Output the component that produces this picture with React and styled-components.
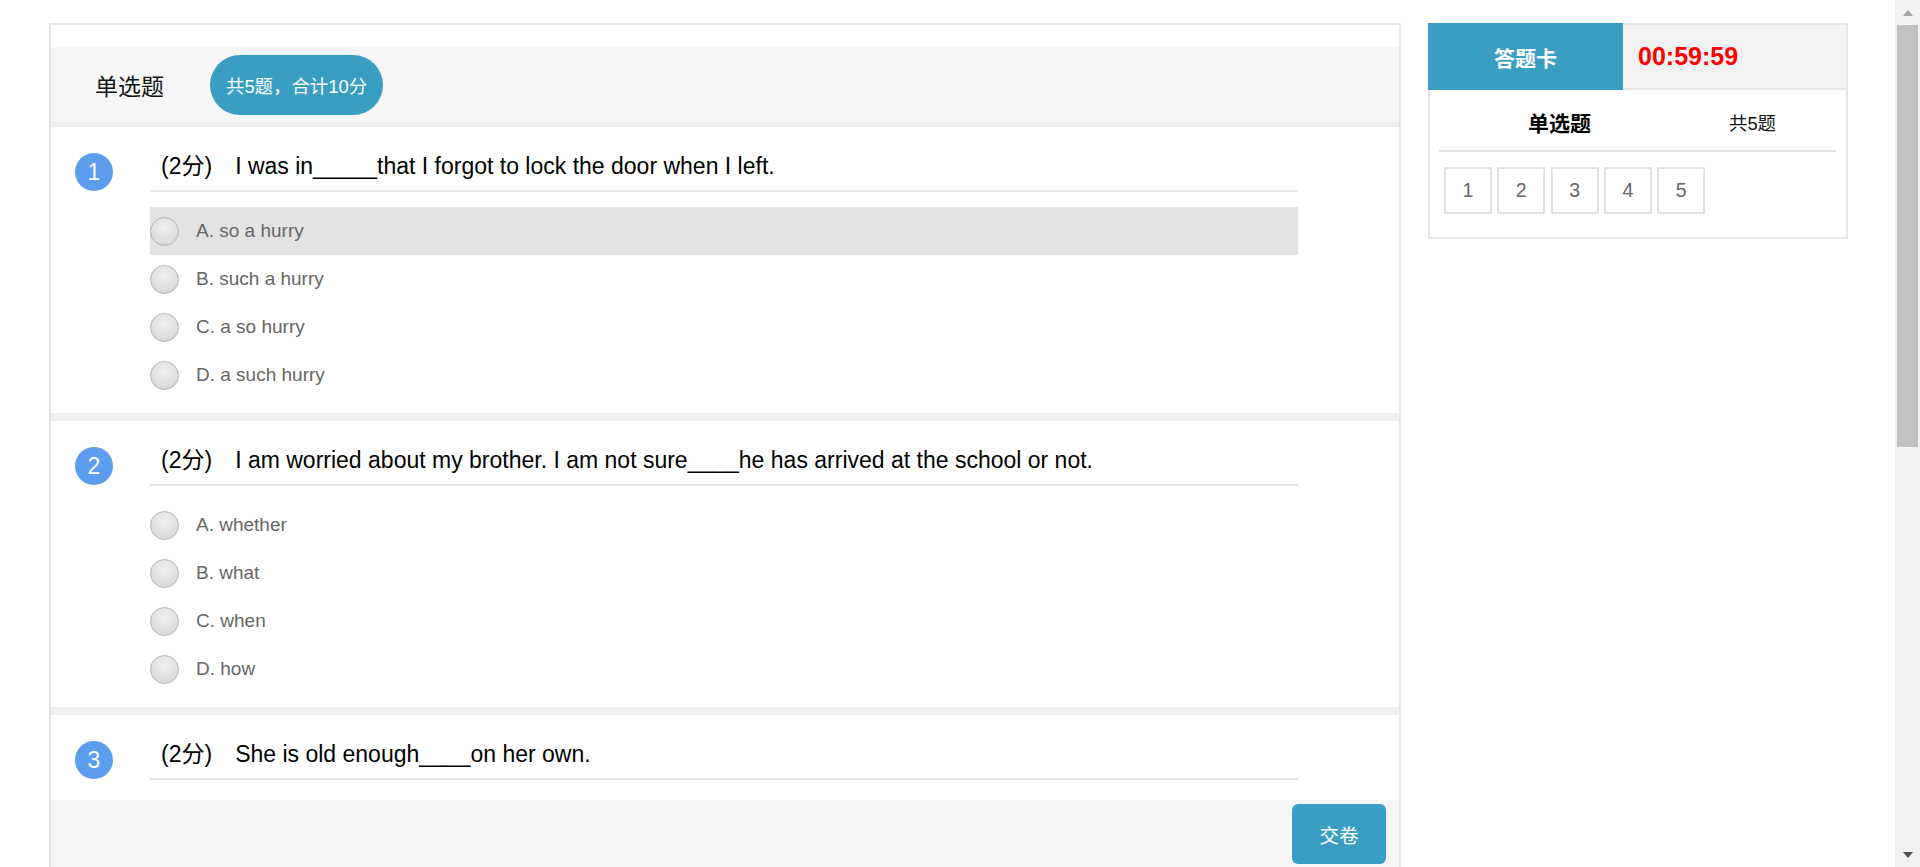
import React from 'react';
import styled, { createGlobalStyle } from 'styled-components';

const Global = createGlobalStyle`
  html, body { margin: 0; padding: 0; height: 100%; overflow: hidden; background: #fff; }
  body { font-family: "Liberation Sans", "Noto Sans CJK SC", sans-serif; }
  #root { height: 100%; }
  *, *::before, *::after { box-sizing: border-box; }
`;

const Page = styled.div`
  display: flex;
  height: 100vh;
`;

const Viewport = styled.div`
  flex: 1;
  min-width: 0;
  height: 100%;
  display: flex;
  align-items: stretch;
  gap: 27px;
  padding: 23px 0 0 49px;
`;

const MainPanel = styled.section`
  width: 1352px;
  display: flex;
  flex-direction: column;
  border: 2px solid #e6e6e6;
  border-bottom: none;
  padding-top: 22px;
  background: #fff;
`;

const SectionHeader = styled.div`
  flex-shrink: 0;
  height: 75px;
  background: #f7f7f7;
  display: flex;
  align-items: center;
  gap: 46px;
  padding-left: 44px;
`;

const SectionTitle = styled.h2`
  margin: 0;
  font-size: 23px;
  font-weight: normal;
  color: #111;
`;

const Pill = styled.span`
  height: 60px;
  padding: 0 16px;
  border-radius: 30px;
  background: #3a9ec2;
  color: #fff;
  font-size: 18.4px;
  display: flex;
  align-items: center;
`;

const QuestionList = styled.div`
  flex: 1;
  min-height: 0;
  overflow: hidden;
  background: #efefef;
  padding-top: 5px;
  display: flex;
  flex-direction: column;
  gap: 8px;
`;

const Card = styled.article`
  flex-shrink: 0;
  background: #fff;
  display: flex;
  align-items: flex-start;
  gap: 37px;
  padding: 26px 101px 14px 24px;

  &:last-child {
    flex-grow: 1;
  }
`;

const NumBadge = styled.div`
  flex-shrink: 0;
  width: 38px;
  height: 38px;
  border-radius: 50%;
  background: #5c9ded;
  color: #fff;
  font-size: 23px;
  display: flex;
  align-items: center;
  justify-content: center;
`;

const QBody = styled.div`
  flex: 1;
  min-width: 0;
`;

const QTitle = styled.div`
  font-size: 23px;
  line-height: 26px;
  color: #000;
  padding: 0 11px 11px;
  border-bottom: 2px solid #e4e4e4;
`;

const Score = styled.span`
  margin-right: 23px;
`;

const Options = styled.ul`
  list-style: none;
  margin: 15px 0 0;
  padding: 0;
`;

const Option = styled.li`
  height: 48px;
  display: flex;
  align-items: center;
  gap: 17px;
  background: ${(p) => (p.$active ? '#e3e3e3' : 'transparent')};
  font-size: 19px;
  color: #666;
`;

const Radio = styled.span`
  flex-shrink: 0;
  width: 29px;
  height: 29px;
  border-radius: 50%;
  border: 1px solid #b3b3b3;
  background: radial-gradient(circle at 50% 35%, #f1f1f1 0%, #dedede 60%, #d4d4d4 100%);
`;

const Footer = styled.footer`
  flex-shrink: 0;
  height: 67px;
  background: #f6f6f6;
  display: flex;
  justify-content: flex-end;
  align-items: flex-start;
  padding: 4px 13px 0 0;
`;

const SubmitButton = styled.button`
  width: 94px;
  height: 60px;
  border: none;
  border-radius: 6px;
  background: #3a9ec2;
  color: #fff;
  font-family: inherit;
  font-size: 19.6px;
  cursor: pointer;
`;

const Sidebar = styled.aside`
  width: 420px;
  align-self: flex-start;
`;

const TabRow = styled.div`
  display: flex;
  height: 67px;
`;

const Tab = styled.div`
  width: 195px;
  background: #3a9ec2;
  color: #fff;
  font-size: 21px;
  font-weight: bold;
  display: flex;
  align-items: center;
  justify-content: center;
`;

const Timer = styled.div`
  flex: 1;
  background: #f2f2f2;
  border: 2px solid #e5e5e5;
  border-left: none;
  color: #ff0000;
  font-size: 25px;
  font-weight: bold;
  display: flex;
  align-items: center;
  padding-left: 15px;
`;

const SideBody = styled.div`
  border: 2px solid #e5e5e5;
  border-top: none;
  padding: 0 10px 23px 9px;
`;

const SideHead = styled.div`
  height: 62px;
  display: grid;
  grid-template-columns: 241px 1fr;
  align-items: center;
  border-bottom: 2px solid #e3e3e3;
`;

const SideTitle = styled.div`
  text-align: center;
  font-size: 21px;
  font-weight: bold;
  color: #000;
  padding-top: 3px;
`;

const SideCount = styled.div`
  padding-left: 49px;
  font-size: 18.4px;
  color: #111;
  padding-top: 3px;
`;

const BoxGrid = styled.div`
  display: flex;
  gap: 5.3px;
  padding: 15px 0 0 5px;
`;

const NumBox = styled.div`
  width: 48px;
  height: 47px;
  border: 2px solid #e2e2e2;
  color: #666;
  font-size: 19.6px;
  display: flex;
  align-items: center;
  justify-content: center;
`;

const Scrollbar = styled.div`
  flex-shrink: 0;
  width: 25px;
  height: 100%;
  background: #f1f1f1;
  display: flex;
  flex-direction: column;
`;

const ScrollButton = styled.div`
  height: 25px;
  flex-shrink: 0;
  display: flex;
  align-items: center;
  justify-content: center;
`;

const Arrow = styled.span`
  width: 0;
  height: 0;
  border-left: 5.5px solid transparent;
  border-right: 5.5px solid transparent;
  ${(p) =>
    p.$dir === 'up'
      ? `border-bottom: 6px solid ${p.$color};`
      : `border-top: 6px solid ${p.$color};`}
`;

const Thumb = styled.div`
  height: 422px;
  margin: 0 2px;
  background: #c1c1c1;
  flex-shrink: 0;
`;

const Track = styled.div`
  flex: 1;
`;

const questions = [
  {
    text: 'I was in_____that I forgot to lock the door when I left.',
    options: ['A. so a hurry', 'B. such a hurry', 'C. a so hurry', 'D. a such hurry'],
    active: 0,
  },
  {
    text: 'I am worried about my brother. I am not sure____he has arrived at the school or not.',
    options: ['A. whether', 'B. what', 'C. when', 'D. how'],
  },
  {
    text: 'She is old enough____on her own.',
    options: [],
  },
];

export default function App() {
  return (
    <>
      <Global />
      <Page>
        <Viewport>
          <MainPanel>
            <SectionHeader>
              <SectionTitle>单选题</SectionTitle>
              <Pill>共5题，合计10分</Pill>
            </SectionHeader>
            <QuestionList>
              {questions.map((q, i) => (
                <Card key={i}>
                  <NumBadge>{i + 1}</NumBadge>
                  <QBody>
                    <QTitle>
                      <Score>(2分)</Score>
                      {q.text}
                    </QTitle>
                    {q.options.length > 0 && (
                      <Options>
                        {q.options.map((o, j) => (
                          <Option key={j} $active={q.active === j}>
                            <Radio />
                            {o}
                          </Option>
                        ))}
                      </Options>
                    )}
                  </QBody>
                </Card>
              ))}
            </QuestionList>
            <Footer>
              <SubmitButton>交卷</SubmitButton>
            </Footer>
          </MainPanel>
          <Sidebar>
            <TabRow>
              <Tab>答题卡</Tab>
              <Timer>00:59:59</Timer>
            </TabRow>
            <SideBody>
              <SideHead>
                <SideTitle>单选题</SideTitle>
                <SideCount>共5题</SideCount>
              </SideHead>
              <BoxGrid>
                {[1, 2, 3, 4, 5].map((n) => (
                  <NumBox key={n}>{n}</NumBox>
                ))}
              </BoxGrid>
            </SideBody>
          </Sidebar>
        </Viewport>
        <Scrollbar>
          <ScrollButton>
            <Arrow $dir="up" $color="#a3a3a3" />
          </ScrollButton>
          <Thumb />
          <Track />
          <ScrollButton>
            <Arrow $dir="down" $color="#505050" />
          </ScrollButton>
        </Scrollbar>
      </Page>
    </>
  );
}
